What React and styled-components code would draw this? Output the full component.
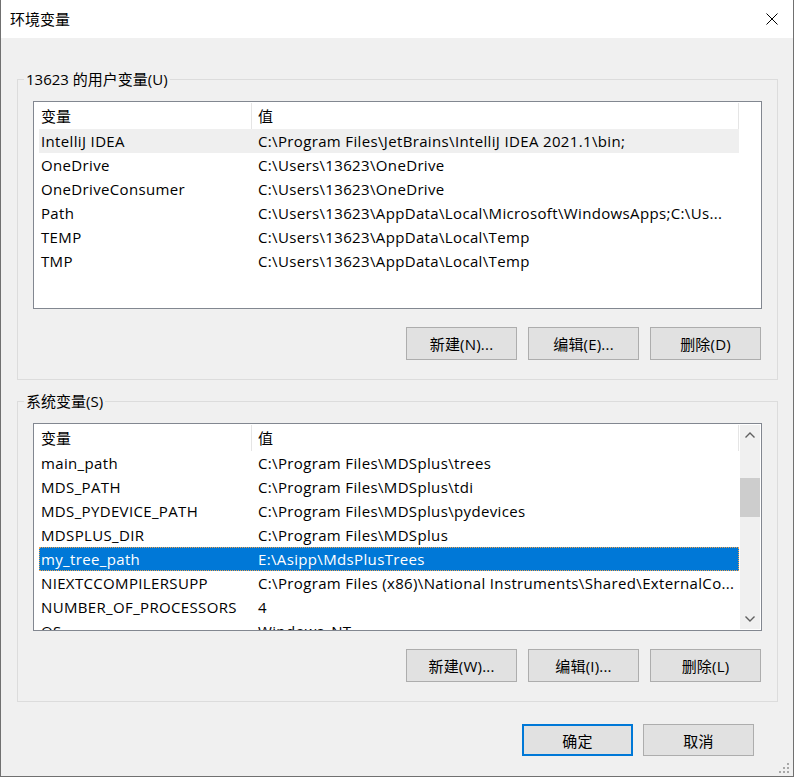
import React from "react";
import styled, { createGlobalStyle } from "styled-components";

const GlobalStyle = createGlobalStyle`
  html, body { margin: 0; padding: 0; background: #f0f0f0; }
  body {
    font-family: "Open Sans", "Noto Sans CJK SC", sans-serif;
    font-size: 15px;
    color: #000;
  }
  * { box-sizing: border-box; }
`;

const Window = styled.div`
  position: relative;
  width: 794px;
  height: 777px;
  background: #f0f0f0;
  border: 1px solid #707070;
  border-top: none;
  display: flex;
  flex-direction: column;
`;

const TitleBar = styled.div`
  height: 38px;
  flex: none;
  background: #fff;
  display: flex;
  align-items: center;
  justify-content: space-between;
  padding: 0 15px 0 9px;
`;

const Title = styled.span`
  font-size: 15px;
  line-height: 20px;
`;

const Body = styled.div`
  padding: 31px 15px 0 16px;
  display: flex;
  flex-direction: column;
`;

const Group = styled.fieldset`
  margin: ${(p) => (p.$first ? "0" : "11px 0 0")};
  padding: 0;
  border: 1px solid #dcdcdc;
  min-width: 0;
`;

const Legend = styled.legend`
  margin-left: 6px;
  padding: 0 2px;
  line-height: 20px;
  font-size: 15px;
`;

const GroupContent = styled.div`
  padding: 12px 15px 19px;
`;

const ListBox = styled.div`
  height: 208px;
  border: 1px solid #828790;
  background: #fff;
  display: flex;
  overflow: hidden;
`;

const ListInner = styled.div`
  flex: 1;
  padding-left: 5px;
  overflow: hidden;
`;

const Row = styled.div`
  display: grid;
  grid-template-columns: 213px 487px;
  width: 700px;
  height: ${(p) => (p.$header ? "27px" : "24px")};
  line-height: 24px;
  background: ${(p) => (p.$selected ? "#0078d7" : p.$hover ? "#efefef" : "transparent")};
  color: ${(p) => (p.$selected ? "#fff" : "#000")};
  outline: ${(p) => (p.$selected ? "1px dotted #f2a24a" : "none")};
  outline-offset: -1px;
`;

const Cell = styled.div`
  padding-left: ${(p) => (p.$second ? "6px" : "2px")};
  letter-spacing: 0.35px;
  white-space: nowrap;
  overflow: hidden;
  text-overflow: ellipsis;
`;

const HeadCell = styled(Cell)`
  border-right: 1px solid #e5e5e5;
  margin: 1px 0 0;
  line-height: 26px;
  letter-spacing: 0;
`;

const Scrollbar = styled.div`
  width: 20px;
  margin: 1px 1px 1px 0;
  background: #f0f0f0;
  display: flex;
  flex-direction: column;
`;

const ArrowBtn = styled.div`
  height: 20px;
  flex: none;
  display: flex;
  align-items: center;
  justify-content: center;
`;

const Track = styled.div`
  flex: 1;
  padding-top: 33px;
`;

const Thumb = styled.div`
  height: 39px;
  background: #cdcdcd;
`;

const ButtonRow = styled.div`
  display: flex;
  justify-content: flex-end;
  gap: ${(p) => (p.$dialog ? "10px" : "11px")};
  margin-top: ${(p) => (p.$dialog ? "22px" : "18px")};
  padding-right: ${(p) => (p.$dialog ? "24px" : "1px")};
`;

const Button = styled.button`
  width: 111px;
  height: ${(p) => (p.$dialog ? "32px" : "33px")};
  padding: 0;
  border-radius: 0;
  background: #e1e1e1;
  border: ${(p) => (p.$primary ? "2px solid #0078d7" : "1px solid #adadad")};
  font-family: inherit;
  font-size: 15px;
  letter-spacing: 0.2px;
  color: #000;
`;

const Grip = styled.svg`
  position: absolute;
  right: 3px;
  bottom: 2px;
`;

const userVars = [
  ["IntelliJ IDEA", String.raw`C:\Program Files\JetBrains\IntelliJ IDEA 2021.1\bin;`],
  ["OneDrive", String.raw`C:\Users\13623\OneDrive`],
  ["OneDriveConsumer", String.raw`C:\Users\13623\OneDrive`],
  ["Path", String.raw`C:\Users\13623\AppData\Local\Microsoft\WindowsApps;C:\Us...`],
  ["TEMP", String.raw`C:\Users\13623\AppData\Local\Temp`],
  ["TMP", String.raw`C:\Users\13623\AppData\Local\Temp`],
];

const sysVars = [
  ["main_path", String.raw`C:\Program Files\MDSplus\trees`],
  ["MDS_PATH", String.raw`C:\Program Files\MDSplus\tdi`],
  ["MDS_PYDEVICE_PATH", String.raw`C:\Program Files\MDSplus\pydevices`],
  ["MDSPLUS_DIR", String.raw`C:\Program Files\MDSplus`],
  ["my_tree_path", String.raw`E:\Asipp\MdsPlusTrees`],
  ["NIEXTCCOMPILERSUPP", String.raw`C:\Program Files (x86)\National Instruments\Shared\ExternalCo...`],
  ["NUMBER_OF_PROCESSORS", "4"],
  ["OS", "Windows_NT"],
];

const Chevron = ({ down }) => (
  <svg width="10" height="6" viewBox="0 0 10 6">
    <path
      d={down ? "M0.5 0.5 L5 5 L9.5 0.5" : "M0.5 5.5 L5 1 L9.5 5.5"}
      fill="none"
      stroke="#606060"
      strokeWidth="1.4"
    />
  </svg>
);

const VarList = ({ rows, hover, selected, scroll }) => (
  <ListBox>
    <ListInner>
      <Row $header>
        <HeadCell>变量</HeadCell>
        <HeadCell $second>值</HeadCell>
      </Row>
      {rows.map(([name, value], i) => (
        <Row key={name} $hover={i === hover} $selected={i === selected}>
          <Cell>{name}</Cell>
          <Cell $second>{value}</Cell>
        </Row>
      ))}
    </ListInner>
    {scroll && (
      <Scrollbar>
        <ArrowBtn>
          <Chevron />
        </ArrowBtn>
        <Track>
          <Thumb />
        </Track>
        <ArrowBtn>
          <Chevron down />
        </ArrowBtn>
      </Scrollbar>
    )}
  </ListBox>
);

export default function App() {
  return (
    <>
      <GlobalStyle />
      <Window>
        <TitleBar>
          <Title>环境变量</Title>
          <svg width="12" height="12" viewBox="0 0 12 12">
            <path d="M0.5 0.5 L11.5 11.5 M11.5 0.5 L0.5 11.5" stroke="#000" strokeWidth="1" />
          </svg>
        </TitleBar>
        <Body>
          <Group $first>
            <Legend>13623 的用户变量(U)</Legend>
            <GroupContent>
              <VarList rows={userVars} hover={0} />
              <ButtonRow>
                <Button>新建(N)...</Button>
                <Button>编辑(E)...</Button>
                <Button>删除(D)</Button>
              </ButtonRow>
            </GroupContent>
          </Group>
          <Group>
            <Legend>系统变量(S)</Legend>
            <GroupContent>
              <VarList rows={sysVars} selected={4} scroll />
              <ButtonRow>
                <Button>新建(W)...</Button>
                <Button>编辑(I)...</Button>
                <Button>删除(L)</Button>
              </ButtonRow>
            </GroupContent>
          </Group>
          <ButtonRow $dialog>
            <Button $dialog $primary>确定</Button>
            <Button $dialog>取消</Button>
          </ButtonRow>
        </Body>
        <Grip width="11" height="11" viewBox="0 0 11 11">
          {[[8, 0], [4, 4], [8, 4], [0, 8], [4, 8], [8, 8]].map(([x, y]) => (
            <rect key={`${x}-${y}`} x={x} y={y} width="2" height="2" fill="#a8a8a8" />
          ))}
        </Grip>
      </Window>
    </>
  );
}
